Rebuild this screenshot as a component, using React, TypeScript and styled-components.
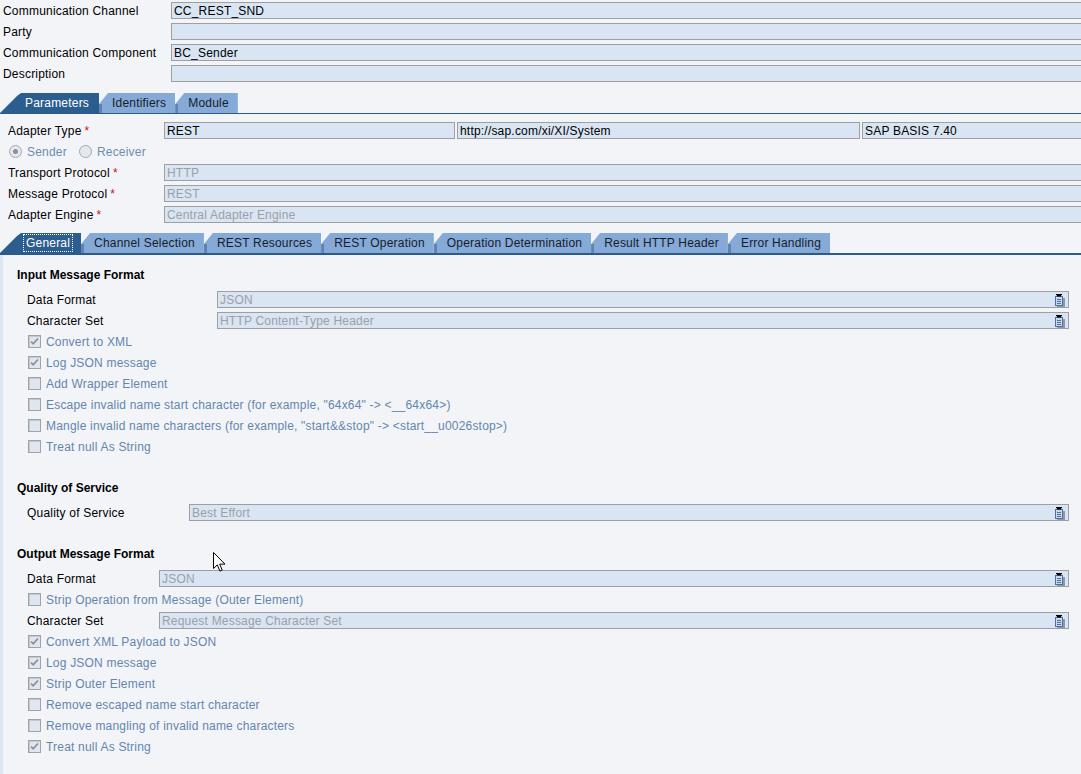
import React from "react";
import styled, { createGlobalStyle } from "styled-components";

const GlobalStyle = createGlobalStyle`
  html, body {
    margin: 0;
    padding: 0;
    background: #f2f4f8;
    overflow: hidden;
  }
  body {
    font-family: "Liberation Sans", Arial, sans-serif;
    font-size: 12px;
    letter-spacing: 0.2px;
    color: #000;
  }
`;

const Page = styled.div`
  position: relative;
  width: 1081px;
  height: 774px;
  overflow: hidden;
  display: flex;
  flex-direction: column;
`;

const Header = styled.div`
  display: flex;
  flex-direction: column;
  padding-left: 3px;
  margin-right: -8px;
`;

const FormRow = styled.div<{ $label: number }>`
  display: grid;
  grid-template-columns: ${(p) => p.$label}px 1fr;
  align-items: center;
  height: 21px;
`;

const Label = styled.div`
  white-space: nowrap;
  color: #000;
`;

const Req = styled.span`
  color: #d01010;
  margin-left: 3px;
`;

const Field = styled.div<{ $disabled?: boolean }>`
  box-sizing: border-box;
  height: 17px;
  background: #d9e5f3;
  border: 1px solid #9d9fa2;
  padding: 1px 3px 0 2px;
  line-height: 15px;
  color: ${(p) => (p.$disabled ? "#9aa0a8" : "#000")};
  white-space: nowrap;
  overflow: hidden;
  display: flex;
  align-items: center;
  justify-content: space-between;
  min-width: 0;
`;

const FieldGroup = styled.div`
  display: grid;
  grid-template-columns: 291px 403px 1fr;
  column-gap: 2px;
`;

const TabStrip = styled.div<{ $top: number }>`
  margin-top: ${(p) => p.$top}px;
`;

const TabBar = styled.div<{ $line: number }>`
  display: flex;
  align-items: flex-end;
  height: 20px;
  border-bottom: ${(p) => p.$line}px solid #2b5a8b;
`;

const Tab = styled.div<{ $active?: boolean }>`
  position: relative;
  height: 20px;
  line-height: 20px;
  box-sizing: border-box;
  padding: ${(p) => (p.$active ? "0 10px 0 25px" : "0 9px 0 13px")};
  background: ${(p) => (p.$active ? "#2c5d8f" : "#86aad7")};
  color: ${(p) => (p.$active ? "#fff" : "#15202c")};
  white-space: nowrap;
  clip-path: ${(p) =>
    p.$active
      ? "polygon(0 100%, 17px 3px, 21px 0, 100% 0, 100% 100%)"
      : "polygon(0 100%, 0 55%, 9px 0, 100% 0, 100% 100%)"};
  &::before {
    content: "";
    display: ${(p) => (p.$active ? "none" : "block")};
    position: absolute;
    left: 0;
    bottom: 0;
    width: 3px;
    height: 45%;
    background: #5f83b0;
  }
`;

const FocusText = styled.span`
  outline: 1px dotted #ffffff;
  outline-offset: 1px;
  padding: 0 1px;
`;

const Params = styled.div`
  display: flex;
  flex-direction: column;
  padding-left: 8px;
  margin-top: 6px;
  margin-right: -8px;
`;

const RadioRow = styled.div`
  display: flex;
  align-items: center;
  height: 21px;
  padding-left: 1px;
  color: #6d8cb0;
`;

const RadioItem = styled.label`
  display: flex;
  align-items: center;
  gap: 5px;
  margin-right: 12px;
`;

const Radio = styled.span<{ $checked?: boolean }>`
  box-sizing: border-box;
  width: 13px;
  height: 13px;
  border-radius: 50%;
  border: 1px solid #a3a7ac;
  background: #e4e9f0;
  display: flex;
  align-items: center;
  justify-content: center;
  &::after {
    content: "";
    display: ${(p) => (p.$checked ? "block" : "none")};
    width: 5px;
    height: 5px;
    border-radius: 50%;
    background: #8d9299;
  }
`;

const Panel = styled.div`
  flex: 1;
  border-left: 3px solid #dbe6f3;
  padding: 10px 12px 0 14px;
  display: flex;
  flex-direction: column;
`;

const Section = styled.div<{ $first?: boolean }>`
  display: flex;
  flex-direction: column;
  margin-top: ${(p) => (p.$first ? 0 : 21)}px;
`;

const SectionTitle = styled.div`
  font-weight: bold;
  letter-spacing: 0;
  height: 21px;
  line-height: 21px;
  margin-bottom: 3px;
`;

const Rows = styled.div`
  display: flex;
  flex-direction: column;
  padding-left: 10px;
`;

const CheckRow = styled.div`
  display: flex;
  align-items: center;
  gap: 5px;
  height: 21px;
  padding-left: 1px;
  color: #6486ad;
`;

const Box = styled.span`
  box-sizing: border-box;
  width: 13px;
  height: 13px;
  border: 1px solid #9fa3a8;
  box-shadow: inset 1px 1px 0 #c4c9d0;
  background: #dfe6ef;
  display: flex;
  align-items: center;
  justify-content: center;
`;

const SelectIcon = () => (
  <svg width="11" height="14" viewBox="0 0 11 14" style={{ flex: "none" }}>
    <rect x="3" y="5" width="8" height="9" fill="#8e99a8" />
    <rect x="1.5" y="3.5" width="7" height="9" fill="#c7d7ec" stroke="#4d72a1" />
    <path d="M2 1h6v1.2H7v1.3H3V2.2H2z" fill="#000" />
    <path d="M3 6.5h4M3 8.5h4M3 10.5h4" stroke="#4d72a1" strokeWidth="1" />
  </svg>
);

const Check = ({ checked }: { checked: boolean }) => (
  <Box>
    {checked && (
      <svg width="9" height="9" viewBox="0 0 9 9">
        <path d="M1 4.5l2.2 2.3L8 1.5" fill="none" stroke="#8c9096" strokeWidth="1.8" />
      </svg>
    )}
  </Box>
);

const Cursor = styled.svg`
  position: absolute;
  left: 213px;
  top: 552px;
`;

const CheckItem = ({ checked, text }: { checked: boolean; text: string }) => (
  <CheckRow>
    <Check checked={checked} />
    <span>{text}</span>
  </CheckRow>
);

const SelectRow = ({ label, value, col }: { label: string; value: string; col: number }) => (
  <FormRow $label={col}>
    <Label>{label}</Label>
    <Field $disabled>
      <span>{value}</span>
      <SelectIcon />
    </Field>
  </FormRow>
);

export default function App() {
  const innerTabs = [
    "Channel Selection",
    "REST Resources",
    "REST Operation",
    "Operation Determination",
    "Result HTTP Header",
    "Error Handling",
  ];
  return (
    <Page>
      <GlobalStyle />
      <Header>
        <FormRow $label={168}>
          <Label>Communication Channel</Label>
          <Field>CC_REST_SND</Field>
        </FormRow>
        <FormRow $label={168}>
          <Label>Party</Label>
          <Field />
        </FormRow>
        <FormRow $label={168}>
          <Label>Communication Component</Label>
          <Field>BC_Sender</Field>
        </FormRow>
        <FormRow $label={168}>
          <Label>Description</Label>
          <Field />
        </FormRow>
      </Header>

      <TabStrip $top={9}>
        <TabBar $line={1}>
          <Tab $active>Parameters</Tab>
          <Tab>Identifiers</Tab>
          <Tab>Module</Tab>
        </TabBar>
      </TabStrip>

      <Params>
        <FormRow $label={156}>
          <Label>
            Adapter Type<Req>*</Req>
          </Label>
          <FieldGroup>
            <Field>REST</Field>
            <Field>http://sap.com/xi/XI/System</Field>
            <Field>SAP BASIS 7.40</Field>
          </FieldGroup>
        </FormRow>
        <RadioRow>
          <RadioItem>
            <Radio $checked />
            Sender
          </RadioItem>
          <RadioItem>
            <Radio />
            Receiver
          </RadioItem>
        </RadioRow>
        <FormRow $label={156}>
          <Label>
            Transport Protocol<Req>*</Req>
          </Label>
          <Field $disabled>HTTP</Field>
        </FormRow>
        <FormRow $label={156}>
          <Label>
            Message Protocol<Req>*</Req>
          </Label>
          <Field $disabled>REST</Field>
        </FormRow>
        <FormRow $label={156}>
          <Label>
            Adapter Engine<Req>*</Req>
          </Label>
          <Field $disabled>Central Adapter Engine</Field>
        </FormRow>
      </Params>

      <TabStrip $top={8}>
        <TabBar $line={2}>
          <Tab $active>
            <FocusText>General</FocusText>
          </Tab>
          {innerTabs.map((t) => (
            <Tab key={t}>{t}</Tab>
          ))}
        </TabBar>
      </TabStrip>

      <Panel>
        <Section $first>
          <SectionTitle>Input Message Format</SectionTitle>
          <Rows>
            <SelectRow label="Data Format" value="JSON" col={190} />
            <SelectRow label="Character Set" value="HTTP Content-Type Header" col={190} />
            <CheckItem checked text="Convert to XML" />
            <CheckItem checked text="Log JSON message" />
            <CheckItem checked={false} text="Add Wrapper Element" />
            <CheckItem
              checked={false}
              text={'Escape invalid name start character (for example, "64x64" -> <__64x64>)'}
            />
            <CheckItem
              checked={false}
              text={'Mangle invalid name characters (for example, "start&&stop" -> <start__u0026stop>)'}
            />
            <CheckItem checked={false} text="Treat null As String" />
          </Rows>
        </Section>

        <Section>
          <SectionTitle>Quality of Service</SectionTitle>
          <Rows>
            <SelectRow label="Quality of Service" value="Best Effort" col={162} />
          </Rows>
        </Section>

        <Section>
          <SectionTitle>Output Message Format</SectionTitle>
          <Rows>
            <SelectRow label="Data Format" value="JSON" col={132} />
            <CheckItem checked={false} text="Strip Operation from Message (Outer Element)" />
            <SelectRow label="Character Set" value="Request Message Character Set" col={132} />
            <CheckItem checked text="Convert XML Payload to JSON" />
            <CheckItem checked text="Log JSON message" />
            <CheckItem checked text="Strip Outer Element" />
            <CheckItem checked={false} text="Remove escaped name start character" />
            <CheckItem checked={false} text="Remove mangling of invalid name characters" />
            <CheckItem checked text="Treat null As String" />
          </Rows>
        </Section>
      </Panel>

      <Cursor width="13" height="21" viewBox="0 0 13 21">
        <path
          d="M0.5 0.5v16l3.8-3.6 2.6 6.2 2.3-1-2.5-6h5.3z"
          fill="#fff"
          stroke="#000"
          strokeWidth="1"
          strokeLinejoin="round"
        />
      </Cursor>
    </Page>
  );
}
